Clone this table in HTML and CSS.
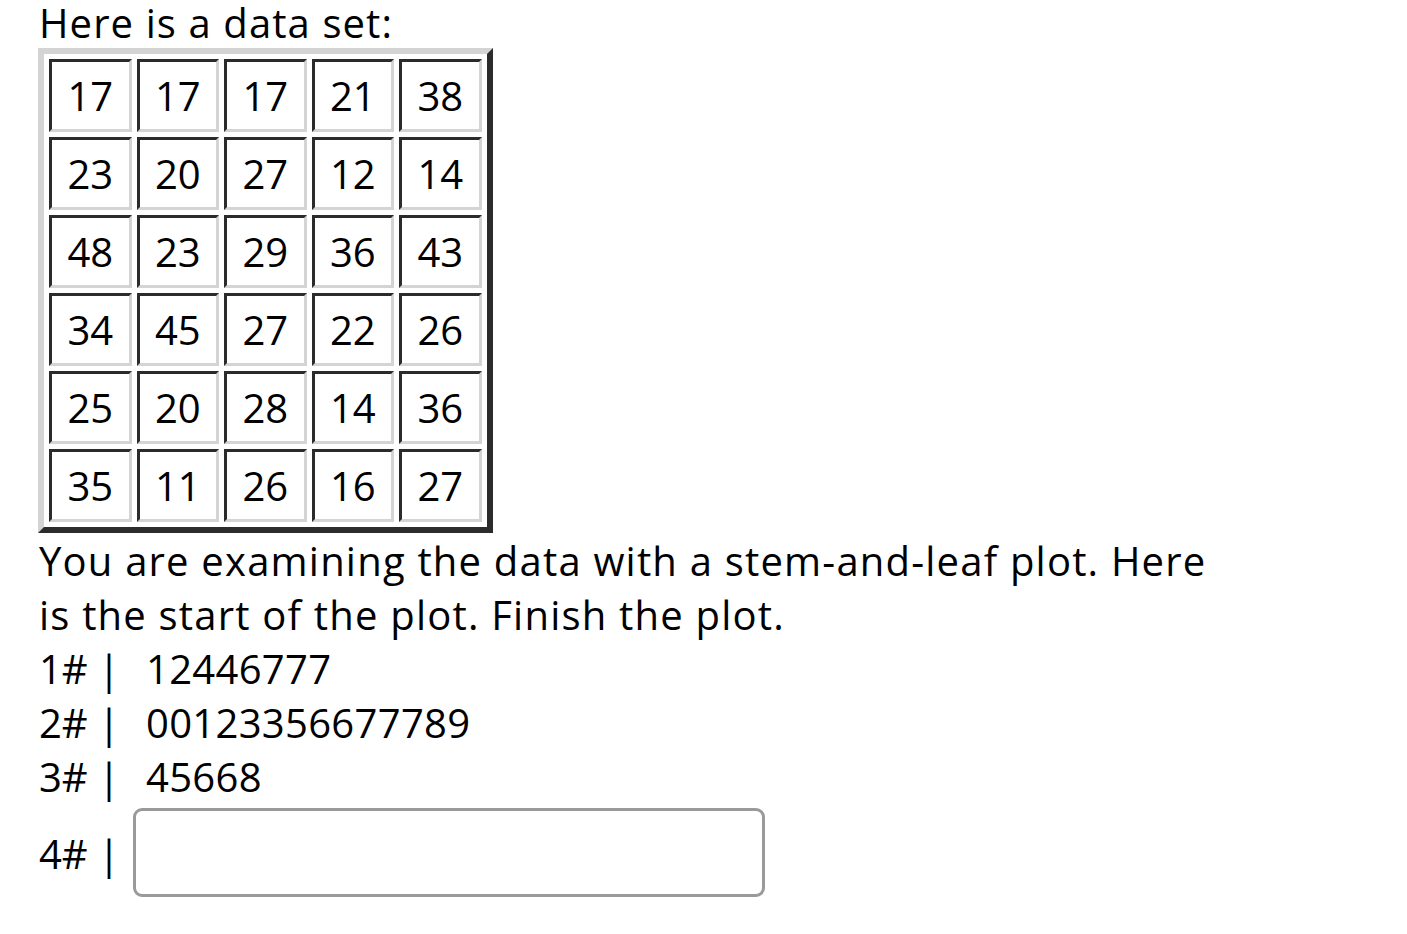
FILE: index.html
```html
<!DOCTYPE html>
<html>
<head>
<meta charset="utf-8">
<link rel="stylesheet" href="styles.css">
</head>
<body>
<div class="page">
  <div class="line">Here is a data set:</div>
  <table class="data">
    <tr><td>17</td><td>17</td><td>17</td><td>21</td><td>38</td></tr>
    <tr><td>23</td><td>20</td><td>27</td><td>12</td><td>14</td></tr>
    <tr><td>48</td><td>23</td><td>29</td><td>36</td><td>43</td></tr>
    <tr><td>34</td><td>45</td><td>27</td><td>22</td><td>26</td></tr>
    <tr><td>25</td><td>20</td><td>28</td><td>14</td><td>36</td></tr>
    <tr><td>35</td><td>11</td><td>26</td><td>16</td><td>27</td></tr>
  </table>
  <p class="prompt">You are examining the data with a stem-and-leaf plot. Here is the start of the plot. Finish the plot.</p>
  <div class="plot">
    <div class="stem">1# |</div><div class="leaves">12446777</div>
    <div class="stem">2# |</div><div class="leaves">00123356677789</div>
    <div class="stem">3# |</div><div class="leaves">45668</div>
    <div class="stem stem-input">4# |</div><div class="leaves"><input class="answer" type="text"></div>
  </div>
</div>
</body>
</html>
```
FILE: styles.css
```css
html, body {
  margin: 0;
  padding: 0;
  background: #ffffff;
}
body {
  font-family: "Open Sans", "DejaVu Sans", sans-serif;
  font-size: 40px;
  line-height: 54px;
  color: #000000;
}
.page {
  padding: 0 0 0 39px;
  width: 1210px;
}
.line {
  height: 48px;
  line-height: 46px;
  letter-spacing: 1.1px;
}
.prompt {
  margin: 0;
  padding-top: 1px;
  letter-spacing: 1.2px;
}
.data {
  border-collapse: separate;
  border-spacing: 5px;
  border-style: solid;
  border-width: 6px;
  border-color: #d4d4d4 #2b2b2b #2b2b2b #d4d4d4;
  margin-left: -1px;
}
.data td {
  width: 76.5px;
  height: 67px;
  padding: 0;
  text-align: center;
  vertical-align: middle;
  border-style: solid;
  border-width: 3px;
  border-color: #2b2b2b #d4d4d4 #d4d4d4 #2b2b2b;
}
.plot {
  display: grid;
  grid-template-columns: 94px auto;
  align-items: center;
}
.stem {
  white-space: pre;
}
.leaves {
  padding-left: 13px;
  letter-spacing: 0.3px;
}
.answer {
  display: block;
  box-sizing: border-box;
  width: 632px;
  height: 89px;
  margin: 4px 0 6px -13px;
  border: 3px solid #9a9a9a;
  border-radius: 9px;
  padding: 0 11px;
  font: inherit;
  background: #ffffff;
}
```
